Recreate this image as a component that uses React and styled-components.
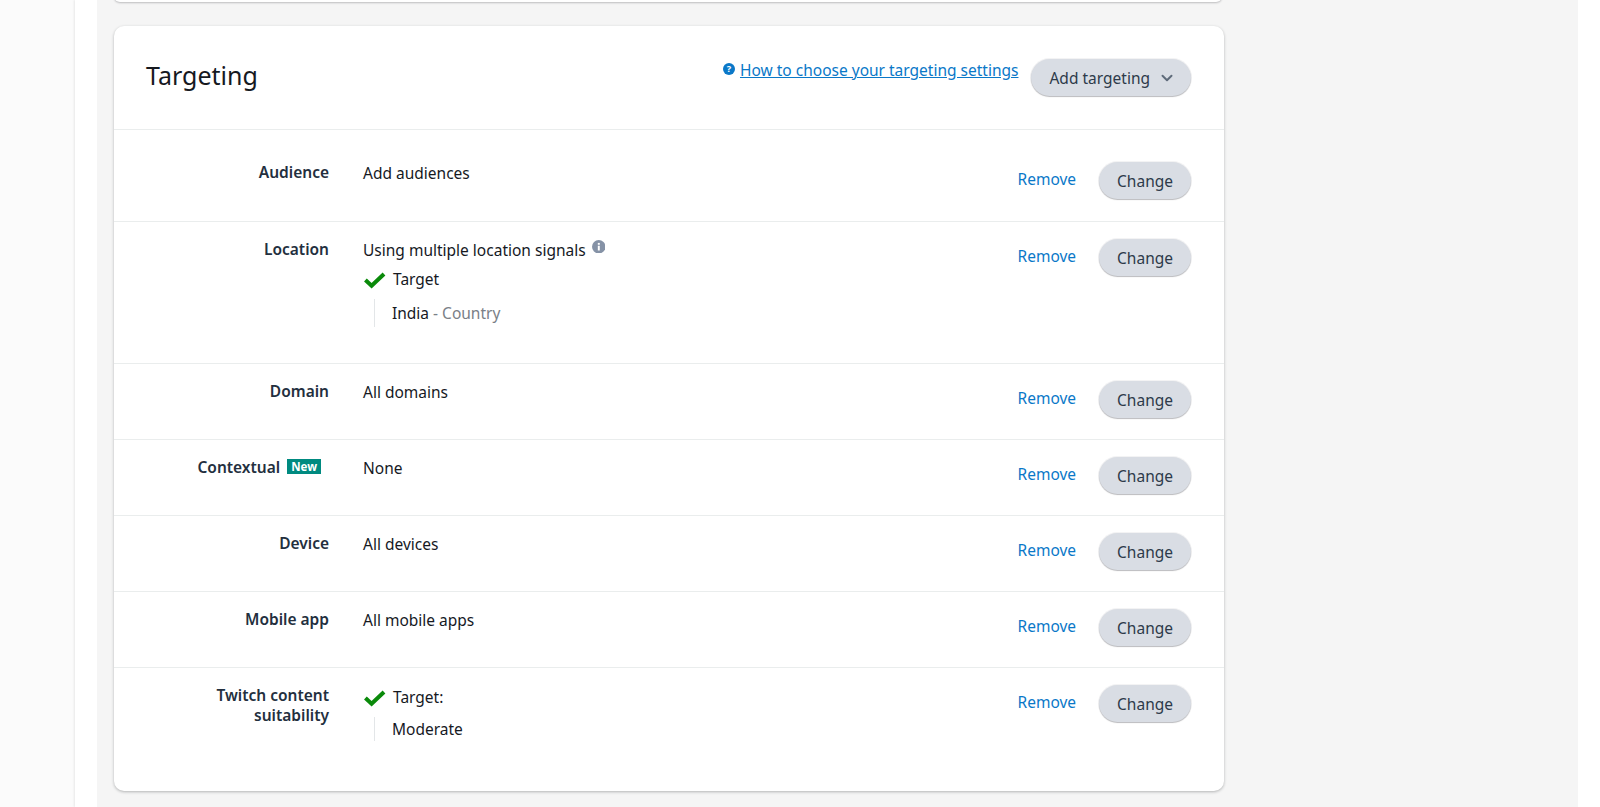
import React from "react";
import styled, { createGlobalStyle } from "styled-components";
import { ChevronDown } from "lucide-react";

const Global = createGlobalStyle`
  html, body { margin: 0; padding: 0; background: #fff; }
  body { font-family: "Noto Sans", "Open Sans", sans-serif; color: #16191f; }
`;

const Page = styled.div`
  display: flex;
  width: 1600px;
  height: 807px;
  overflow: hidden;
`;
const Sidebar = styled.div`
  width: 75px;
  background: #fbfbfb;
  flex-shrink: 0;
`;
const Gutter = styled.div`
  width: 22px;
  background: #fff;
  box-shadow: -1px 0 2px rgba(0, 0, 0, 0.08);
  flex-shrink: 0;
`;
const Main = styled.div`
  width: 1481px;
  background: #f5f5f5;
  padding: 0 0 0 17px;
  box-sizing: border-box;
`;
const TopCardEdge = styled.div`
  width: 1108px;
  height: 12px;
  margin-top: -10px;
  margin-bottom: 24px;
  background: #fff;
  border-radius: 10px;
  box-shadow: 0 1px 2px rgba(22, 25, 31, 0.25);
`;
const Card = styled.section`
  width: 1110px;
  height: 765px;
  background: #fff;
  border-radius: 10px;
  box-shadow: 0 1px 3px rgba(22, 25, 31, 0.3);
  display: flex;
  flex-direction: column;
`;
const CardHeader = styled.header`
  height: 103px;
  box-sizing: border-box;
  padding: 33px 33px 0 32px;
  display: flex;
  justify-content: space-between;
  align-items: flex-start;
`;
const Title = styled.h2`
  margin: -1px 0 0;
  font-size: 25px;
  line-height: 34px;
  font-weight: 400;
  color: #16191f;
`;
const HeaderActions = styled.div`
  display: flex;
  align-items: flex-start;
  gap: 13px;
`;
const HelpLink = styled.a`
  display: flex;
  align-items: flex-start;
  gap: 5px;
  font-size: 15.5px;
  line-height: 22px;
  color: #0a78c8;
  text-decoration: underline;
  svg { margin-top: 4px; }
`;
const Button = styled.button`
  display: inline-flex;
  align-items: center;
  justify-content: center;
  gap: 8px;
  height: 37px;
  padding: 0 18px;
  border: 0;
  border-radius: 19px;
  background: #d9dde4;
  box-shadow: 0 1px 1px rgba(22, 25, 31, 0.25), 0 0 0 1px rgba(22, 25, 31, 0.05);
  font-family: inherit;
  font-size: 15.5px;
  color: #2d3a4a;
  svg { margin-right: -3px; }
`;
const Row = styled.div`
  height: ${(p) => p.$height}px;
  box-sizing: border-box;
  border-top: 1px solid #eaeded;
  padding: ${(p) => p.$top || 17}px 33px 0 0;
  display: flex;
  align-items: flex-start;
`;
const Label = styled.div`
  width: 215px;
  flex-shrink: 0;
  text-align: right;
  font-size: 15.5px;
  line-height: 20px;
  font-weight: 600;
  color: #232f3e;
`;
const Value = styled.div`
  flex: 1;
  margin-left: 34px;
  font-size: 15.5px;
  line-height: 22px;
  color: #16191f;
`;
const RowActions = styled.div`
  display: flex;
  align-items: flex-start;
  gap: 23px;
`;
const RemoveLink = styled.a`
  margin-top: 6px;
  font-size: 15.5px;
  line-height: 22px;
  color: #0a78c8;
`;
const NewBadge = styled.span`
  display: inline-block;
  margin: 0 8px 0 7px;
  padding: 0 4px;
  height: 15px;
  line-height: 15px;
  vertical-align: 2px;
  background: #008a80;
  color: #fff;
  font-size: 11.5px;
  font-weight: 700;
`;
const InfoIcon = styled.svg`
  width: 13.5px;
  height: 13.5px;
  margin-left: 6px;
  vertical-align: 3px;
`;
const TargetLine = styled.div`
  display: flex;
  align-items: center;
  gap: 7px;
  margin-top: ${(p) => p.$top}px;
  line-height: 22px;
  svg { margin-top: 2px; }
`;
const TargetItems = styled.div`
  margin: 9px 0 0 11px;
  padding: ${(p) => p.$pad}px 0 ${(p) => p.$pad}px 17px;
  border-left: 1px solid #e3e6e8;
`;
const Muted = styled.span`
  color: #7a8087;
`;

const Check = () => (
  <svg width="23" height="18" viewBox="0 0 23 18">
    <path d="M2.4 9 L8.6 14.8 L21 3" fill="none" stroke="#0a8a0a" strokeWidth="4" />
  </svg>
);

const Actions = () => (
  <RowActions>
    <RemoveLink>Remove</RemoveLink>
    <Button>Change</Button>
  </RowActions>
);

export default function App() {
  return (
    <Page>
      <Global />
      <Sidebar />
      <Gutter />
      <Main>
        <TopCardEdge />
        <Card>
          <CardHeader>
            <Title>Targeting</Title>
            <HeaderActions>
              <HelpLink>
                <svg width="12" height="12" viewBox="0 0 13 13">
                  <circle cx="6.5" cy="6.5" r="6.5" fill="#0a78c8" />
                  <text x="6.5" y="10.2" textAnchor="middle" fontSize="10" fontWeight="700" fill="#fff">?</text>
                </svg>
                How to choose your targeting settings
              </HelpLink>
              <Button>
                Add targeting
                <ChevronDown size={18} strokeWidth={2.6} color="#5f6b7a" />
              </Button>
            </HeaderActions>
          </CardHeader>

          <Row $height={92} $top={32}>
            <Label>Audience</Label>
            <Value>Add audiences</Value>
            <Actions />
          </Row>
          <Row $height={142}>
            <Label>Location</Label>
            <Value>
              Using multiple location signals
              <InfoIcon viewBox="0 0 13 13">
                <circle cx="6.5" cy="6.5" r="6.5" fill="#8592a6" />
                <rect x="5.6" y="5.5" width="1.9" height="4.6" fill="#fff" />
                <rect x="5.6" y="2.8" width="1.9" height="1.8" fill="#fff" />
              </InfoIcon>
              <TargetLine $top={7}><Check />Target</TargetLine>
              <TargetItems $pad={3}>India <Muted>- Country</Muted></TargetItems>
            </Value>
            <Actions />
          </Row>
          <Row $height={76}>
            <Label>Domain</Label>
            <Value>All domains</Value>
            <Actions />
          </Row>
          <Row $height={76}>
            <Label>Contextual<NewBadge>New</NewBadge></Label>
            <Value>None</Value>
            <Actions />
          </Row>
          <Row $height={76}>
            <Label>Device</Label>
            <Value>All devices</Value>
            <Actions />
          </Row>
          <Row $height={76}>
            <Label>Mobile app</Label>
            <Value>All mobile apps</Value>
            <Actions />
          </Row>
          <Row $height={124}>
            <Label>Twitch content<br />suitability</Label>
            <Value>
              <TargetLine $top={1}><Check />Target:</TargetLine>
              <TargetItems $pad={1}>Moderate</TargetItems>
            </Value>
            <Actions />
          </Row>
        </Card>
      </Main>
    </Page>
  );
}
